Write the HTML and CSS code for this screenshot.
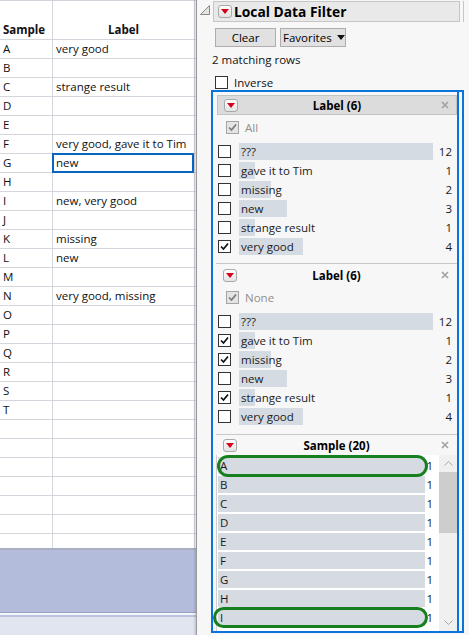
FILE: index.html
```html
<!DOCTYPE html>
<html>
<head>
<meta charset="utf-8">
<link rel="stylesheet" href="styles.css">
</head>
<body>
<div class="app">
  <div class="grid-pane">
    <div class="grid">
      <div class="row head"><div class="c1">Sample</div><div class="c2">Label</div></div>
      <div class="row"><div class="c1">A</div><div class="c2">very good</div></div>
      <div class="row"><div class="c1">B</div><div class="c2"></div></div>
      <div class="row"><div class="c1">C</div><div class="c2">strange result</div></div>
      <div class="row"><div class="c1">D</div><div class="c2"></div></div>
      <div class="row"><div class="c1">E</div><div class="c2"></div></div>
      <div class="row"><div class="c1">F</div><div class="c2">very good, gave it to Tim</div></div>
      <div class="row"><div class="c1">G</div><div class="c2 sel">new</div></div>
      <div class="row"><div class="c1">H</div><div class="c2"></div></div>
      <div class="row"><div class="c1">I</div><div class="c2">new, very good</div></div>
      <div class="row"><div class="c1">J</div><div class="c2"></div></div>
      <div class="row"><div class="c1">K</div><div class="c2">missing</div></div>
      <div class="row"><div class="c1">L</div><div class="c2">new</div></div>
      <div class="row"><div class="c1">M</div><div class="c2"></div></div>
      <div class="row"><div class="c1">N</div><div class="c2">very good, missing</div></div>
      <div class="row"><div class="c1">O</div><div class="c2"></div></div>
      <div class="row"><div class="c1">P</div><div class="c2"></div></div>
      <div class="row"><div class="c1">Q</div><div class="c2"></div></div>
      <div class="row"><div class="c1">R</div><div class="c2"></div></div>
      <div class="row"><div class="c1">S</div><div class="c2"></div></div>
      <div class="row"><div class="c1">T</div><div class="c2"></div></div>
      <div class="row"><div class="c1"></div><div class="c2"></div></div>
      <div class="row"><div class="c1"></div><div class="c2"></div></div>
      <div class="row"><div class="c1"></div><div class="c2"></div></div>
      <div class="row"><div class="c1"></div><div class="c2"></div></div>
      <div class="row"><div class="c1"></div><div class="c2"></div></div>
      <div class="row"><div class="c1"></div><div class="c2"></div></div>
      <div class="row"><div class="c1"></div><div class="c2"></div></div>
    </div>
    <div class="foot">
      <div class="foot-band"></div>
      <div class="foot-lines"></div>
      <div class="foot-light"></div>
    </div>
  </div>

  <div class="panel">
    <div class="title-row">
      <svg class="disclose" width="10" height="10" viewBox="0 0 10 10"><polygon points="9.5,0.5 9.5,9.5 0.5,9.5" fill="#e4e4e4" stroke="#8a8a8a" stroke-width="1"/></svg>
      <div class="title-box">
        <span class="rb"><svg width="8" height="5" viewBox="0 0 8 5"><path d="M0 0H8L4 5Z" fill="#d6001c"/></svg></span>
        <span class="title">Local Data Filter</span>
      </div>
    </div>

    <div class="btn-row">
      <div class="btn clear">Clear</div>
      <div class="btn fav">Favorites <svg width="8" height="5" viewBox="0 0 8 5"><path d="M0 0H8L4 5Z" fill="#111"/></svg></div>
    </div>

    <div class="matching">2 matching rows</div>

    <div class="inverse"><span class="cb"></span><span>Inverse</span></div>

    <div class="filters">
      <div class="filters-inner">

        <div class="card card1">
          <div class="card-head">
            <span class="rb"><svg width="8" height="5" viewBox="0 0 8 5"><path d="M0 0H8L4 5Z" fill="#d6001c"/></svg></span>
            <span class="card-title">Label (6)</span>
            <svg class="close" width="8" height="8" viewBox="0 0 8 8"><path d="M1 1L7 7M7 1L1 7" stroke="#a3a3a3" stroke-width="1.7"/></svg>
          </div>
          <div class="all-row"><span class="cb dim on"><svg width="11" height="11" viewBox="0 0 11 11"><path d="M2 5.5L4.5 8L9 2.5" fill="none" stroke="#7a7a7a" stroke-width="1.7"/></svg></span><span class="dim-txt">All</span></div>
          <div class="items">
            <div class="item"><span class="cb"></span><div class="lab"><span class="bar" style="width:194px"></span><span class="txt">???</span></div><span class="cnt">12</span></div>
            <div class="item"><span class="cb"></span><div class="lab"><span class="bar" style="width:16px"></span><span class="txt">gave it to Tim</span></div><span class="cnt">1</span></div>
            <div class="item"><span class="cb"></span><div class="lab"><span class="bar" style="width:32px"></span><span class="txt">missing</span></div><span class="cnt">2</span></div>
            <div class="item"><span class="cb"></span><div class="lab"><span class="bar" style="width:48px"></span><span class="txt">new</span></div><span class="cnt">3</span></div>
            <div class="item"><span class="cb"></span><div class="lab"><span class="bar" style="width:16px"></span><span class="txt">strange result</span></div><span class="cnt">1</span></div>
            <div class="item"><span class="cb"><svg width="11" height="11" viewBox="0 0 11 11"><path d="M2 5.5L4.5 8L9 2.5" fill="none" stroke="#111" stroke-width="1.7"/></svg></span><div class="lab"><span class="bar" style="width:64px"></span><span class="txt">very good</span></div><span class="cnt">4</span></div>
          </div>
        </div>

        <div class="card card2">
          <div class="card-head">
            <span class="rb"><svg width="8" height="5" viewBox="0 0 8 5"><path d="M0 0H8L4 5Z" fill="#d6001c"/></svg></span>
            <span class="card-title">Label (6)</span>
            <svg class="close" width="8" height="8" viewBox="0 0 8 8"><path d="M1 1L7 7M7 1L1 7" stroke="#a3a3a3" stroke-width="1.7"/></svg>
          </div>
          <div class="all-row"><span class="cb dim on"><svg width="11" height="11" viewBox="0 0 11 11"><path d="M2 5.5L4.5 8L9 2.5" fill="none" stroke="#7a7a7a" stroke-width="1.7"/></svg></span><span class="dim-txt">None</span></div>
          <div class="items">
            <div class="item"><span class="cb"></span><div class="lab"><span class="bar" style="width:194px"></span><span class="txt">???</span></div><span class="cnt">12</span></div>
            <div class="item"><span class="cb"><svg width="11" height="11" viewBox="0 0 11 11"><path d="M2 5.5L4.5 8L9 2.5" fill="none" stroke="#111" stroke-width="1.7"/></svg></span><div class="lab"><span class="bar" style="width:16px"></span><span class="txt">gave it to Tim</span></div><span class="cnt">1</span></div>
            <div class="item"><span class="cb"><svg width="11" height="11" viewBox="0 0 11 11"><path d="M2 5.5L4.5 8L9 2.5" fill="none" stroke="#111" stroke-width="1.7"/></svg></span><div class="lab"><span class="bar" style="width:32px"></span><span class="txt">missing</span></div><span class="cnt">2</span></div>
            <div class="item"><span class="cb"></span><div class="lab"><span class="bar" style="width:48px"></span><span class="txt">new</span></div><span class="cnt">3</span></div>
            <div class="item"><span class="cb"><svg width="11" height="11" viewBox="0 0 11 11"><path d="M2 5.5L4.5 8L9 2.5" fill="none" stroke="#111" stroke-width="1.7"/></svg></span><div class="lab"><span class="bar" style="width:16px"></span><span class="txt">strange result</span></div><span class="cnt">1</span></div>
            <div class="item"><span class="cb"></span><div class="lab"><span class="bar" style="width:64px"></span><span class="txt">very good</span></div><span class="cnt">4</span></div>
          </div>
        </div>

        <div class="card card3">
          <div class="card-head">
            <span class="rb"><svg width="8" height="5" viewBox="0 0 8 5"><path d="M0 0H8L4 5Z" fill="#d6001c"/></svg></span>
            <span class="card-title">Sample (20)</span>
            <svg class="close" width="8" height="8" viewBox="0 0 8 8"><path d="M1 1L7 7M7 1L1 7" stroke="#a3a3a3" stroke-width="1.7"/></svg>
          </div>
          <div class="list">
            <div class="list-rows">
              <div class="srow"><span class="sbar">A</span><span class="scnt">1</span></div>
              <div class="srow"><span class="sbar">B</span><span class="scnt">1</span></div>
              <div class="srow"><span class="sbar">C</span><span class="scnt">1</span></div>
              <div class="srow"><span class="sbar">D</span><span class="scnt">1</span></div>
              <div class="srow"><span class="sbar">E</span><span class="scnt">1</span></div>
              <div class="srow"><span class="sbar">F</span><span class="scnt">1</span></div>
              <div class="srow"><span class="sbar">G</span><span class="scnt">1</span></div>
              <div class="srow"><span class="sbar">H</span><span class="scnt">1</span></div>
              <div class="srow"><span class="sbar">I</span><span class="scnt">1</span></div>
            </div>
            <div class="scroll">
              <svg class="chev" width="9" height="5" viewBox="0 0 9 5"><polyline points="0.5,4.5 4.5,0.5 8.5,4.5" fill="none" stroke="#a6a6a6" stroke-width="1"/></svg>
              <div class="thumb"></div>
              <div class="track"></div>
              <svg class="chev" width="9" height="5" viewBox="0 0 9 5"><polyline points="0.5,0.5 4.5,4.5 8.5,0.5" fill="none" stroke="#a6a6a6" stroke-width="1"/></svg>
            </div>
            <div class="ring ring-a"></div>
            <div class="ring ring-i"></div>
          </div>
        </div>

      </div>
    </div>
  </div>
</div>
</body>
</html>
```

FILE: styles.css
```css
* { box-sizing: border-box; }
html, body { margin: 0; padding: 0; }
body {
  font-family: "Open Sans", "Noto Sans", sans-serif;
  font-size: 11.5px;
  color: #111;
  background: #f7f7f7;
}
.app { display: flex; width: 469px; height: 635px; overflow: hidden; }

/* ---------- data grid ---------- */
.grid-pane {
  position: relative;
  width: 197px;
  flex: none;
  display: flex;
  flex-direction: column;
  border-right: 1px solid #9a9a9a;
  background: #fff;
}
.grid-pane::after {
  content: "";
  position: absolute;
  top: 0; bottom: 0; right: 0;
  width: 3px;
  background: linear-gradient(to right, rgba(0,0,0,0), rgba(0,0,0,0.14));
}
.grid { height: 548px; flex: none; overflow: hidden; border-top: 1px solid #d2d2da; background: #fff; }
.row {
  display: grid;
  grid-template-columns: 53px 142px;
  height: 19px;
  border-bottom: 1px solid #d5d5de;
}
.row > div {
  position: relative;
  border-right: 1px solid #d5d5de;
  padding-left: 3px;
  line-height: 18px;
  white-space: nowrap;
  overflow: visible;
}
.row.head { height: 39px; font-weight: bold; }
.row.head > div { display: flex; align-items: flex-end; line-height: 16px; padding-bottom: 1px; }
.row.head .c2 { justify-content: center; padding-left: 0; }
.c2.sel::after {
  content: "";
  position: absolute;
  left: -1px; top: -1px; right: 0; bottom: -1px;
  border: 2px solid #0a64c2;
}
.foot { flex: 1; display: flex; flex-direction: column; }
.foot-band { height: 64px; background: #b3bcdb; border-top: 2px solid #a9aec4; }
.foot-lines {
  height: 5px;
  background: linear-gradient(#9aa1c2 0 1px, #f4f5fa 1px 3px, #bcc3df 3px 5px);
}
.foot-light { flex: 1; background: #e0e5f0; }

/* ---------- filter panel ---------- */
.panel {
  flex: 1;
  min-width: 0;
  display: flex;
  flex-direction: column;
  padding-top: 1px;
  background: #f7f7f7;
}
.title-row { display: flex; align-items: flex-start; padding-left: 3px; }
.disclose { flex: none; margin-top: 4px; }
.title-box {
  margin-left: 3px;
  width: 247px;
  height: 21px;
  display: flex;
  align-items: center;
  background: #e9e9e9;
  border: 1px solid #c6c6c6;
  box-shadow: 3px 0 0 #f7f7f7, 4px 0 0 #c6c6c6;
}
.title-box .rb { margin-left: 4px; }
.title { margin-left: 2px; font-weight: bold; font-size: 13.8px; color: #000; line-height: 19px; }

.rb {
  flex: none;
  width: 14px;
  height: 13px;
  border: 1px solid #a9a9a9;
  border-radius: 3px;
  background: linear-gradient(#fdfdfd, #e3e3e3);
  display: grid;
  place-items: center;
}
.rb svg { display: block; }

.btn-row { display: flex; gap: 4px; margin: 6px 0 0 18px; }
.btn {
  height: 19px;
  border: 1px solid #adadad;
  background: #e1e1e1;
  display: flex;
  align-items: center;
  justify-content: center;
  line-height: 17px;
  color: #000;
}
.btn.clear { width: 61px; }
.btn.fav { width: 66px; gap: 5px; justify-content: flex-start; padding-left: 2px; }

.matching { margin: 5px 0 0 15px; height: 16px; line-height: 16px; }
.inverse { margin: 6px 0 0 18px; height: 16px; display: flex; align-items: center; gap: 6px; }

.cb {
  flex: none;
  width: 13px;
  height: 13px;
  border: 1px solid #333;
  background: #fff;
  display: grid;
  place-items: center;
}
.cb svg { display: block; }
.cb.dim { border-color: #a5a5a5; background: #e4e4e4; }
.dim-txt { color: #8f8f8f; }

.filters {
  flex: 1;
  margin: 0 0 2px 14px;
  width: 253px;
  border: 2px solid #0a74da;
}
.filters-inner {
  height: 100%;
  margin-right: 3px;
  border-right: 2px solid #0a74da;
  padding-left: 3px;
  display: flex;
  flex-direction: column;
}

.card { border-bottom: 1px solid #c9c9c9; }
.card-head {
  height: 20px;
  display: grid;
  grid-template-columns: 1fr auto 1fr;
  align-items: center;
  font-weight: bold;
  color: #000;
}
.card-head .rb { justify-self: start; margin-left: 7px; }
.card-head .close { justify-self: end; margin-right: 8px; display: block; }
.card1 .card-head { margin: 3px 0 0 1px; background: #dcdcdc; border: 1px solid #c4c4c4; }
.card1 .card-head .rb { margin-left: 6px; }
.card1 .card-head .close { margin-right: 7px; }
.card2 .card-head, .card3 .card-head { margin-top: 1px; }

.all-row { height: 26px; display: flex; align-items: center; gap: 6px; padding-left: 10px; }
.card1 .all-row { height: 25px; }
.card2 .all-row { height: 25px; }

.items { padding: 2px 0 7px 0; }
.card2 .items { padding-bottom: 8px; }
.item { height: 19px; display: flex; align-items: center; padding: 0 5px 0 2px; }
.item .cb { margin-right: 8px; }
.lab { flex: 1; display: grid; height: 17px; }
.lab > * { grid-area: 1 / 1; }
.bar { background: #d5dbe2; height: 17px; }
.txt { padding-left: 2px; line-height: 17px; color: #1a1a1a; white-space: nowrap; }
.cnt { width: 17px; text-align: right; color: #1a1a1a; }

.card3 { border-bottom: none; flex: 1; display: flex; flex-direction: column; }
.card3 .card-head { margin-top: 0; }
.list {
  position: relative;
  flex: 1;
  display: flex;
  border-left: 1px solid #cfcfcf;
  background: #fff;
}
.list-rows { flex: 1; padding-top: 2px; }
.srow { height: 19px; display: flex; }
.sbar {
  margin-left: 1px;
  width: 207px;
  height: 17px;
  line-height: 17px;
  padding-left: 2px;
  background: #d6dbe2;
  color: #1a1a1a;
}
.scnt { width: 12px; padding-right: 4px; text-align: right; line-height: 17px; color: #1a1a1a; }
.scroll {
  width: 18px;
  margin-left: 1px;
  background: #f0f0f0;
  display: flex;
  flex-direction: column;
  align-items: center;
}
.chev { display: block; flex: none; margin: 6px 0; }
.thumb { width: 18px; height: 61px; background: #cdcdcd; margin-top: 0; flex: none; }
.track { flex: 1; }

.ring {
  position: absolute;
  border: 3px solid #16801e;
  border-radius: 11px;
  pointer-events: none;
}
.ring-a { left: 0; top: 0; width: 211px; height: 22px; }
.ring-i { left: -4px; top: 152px; width: 215px; height: 21px; }
```
